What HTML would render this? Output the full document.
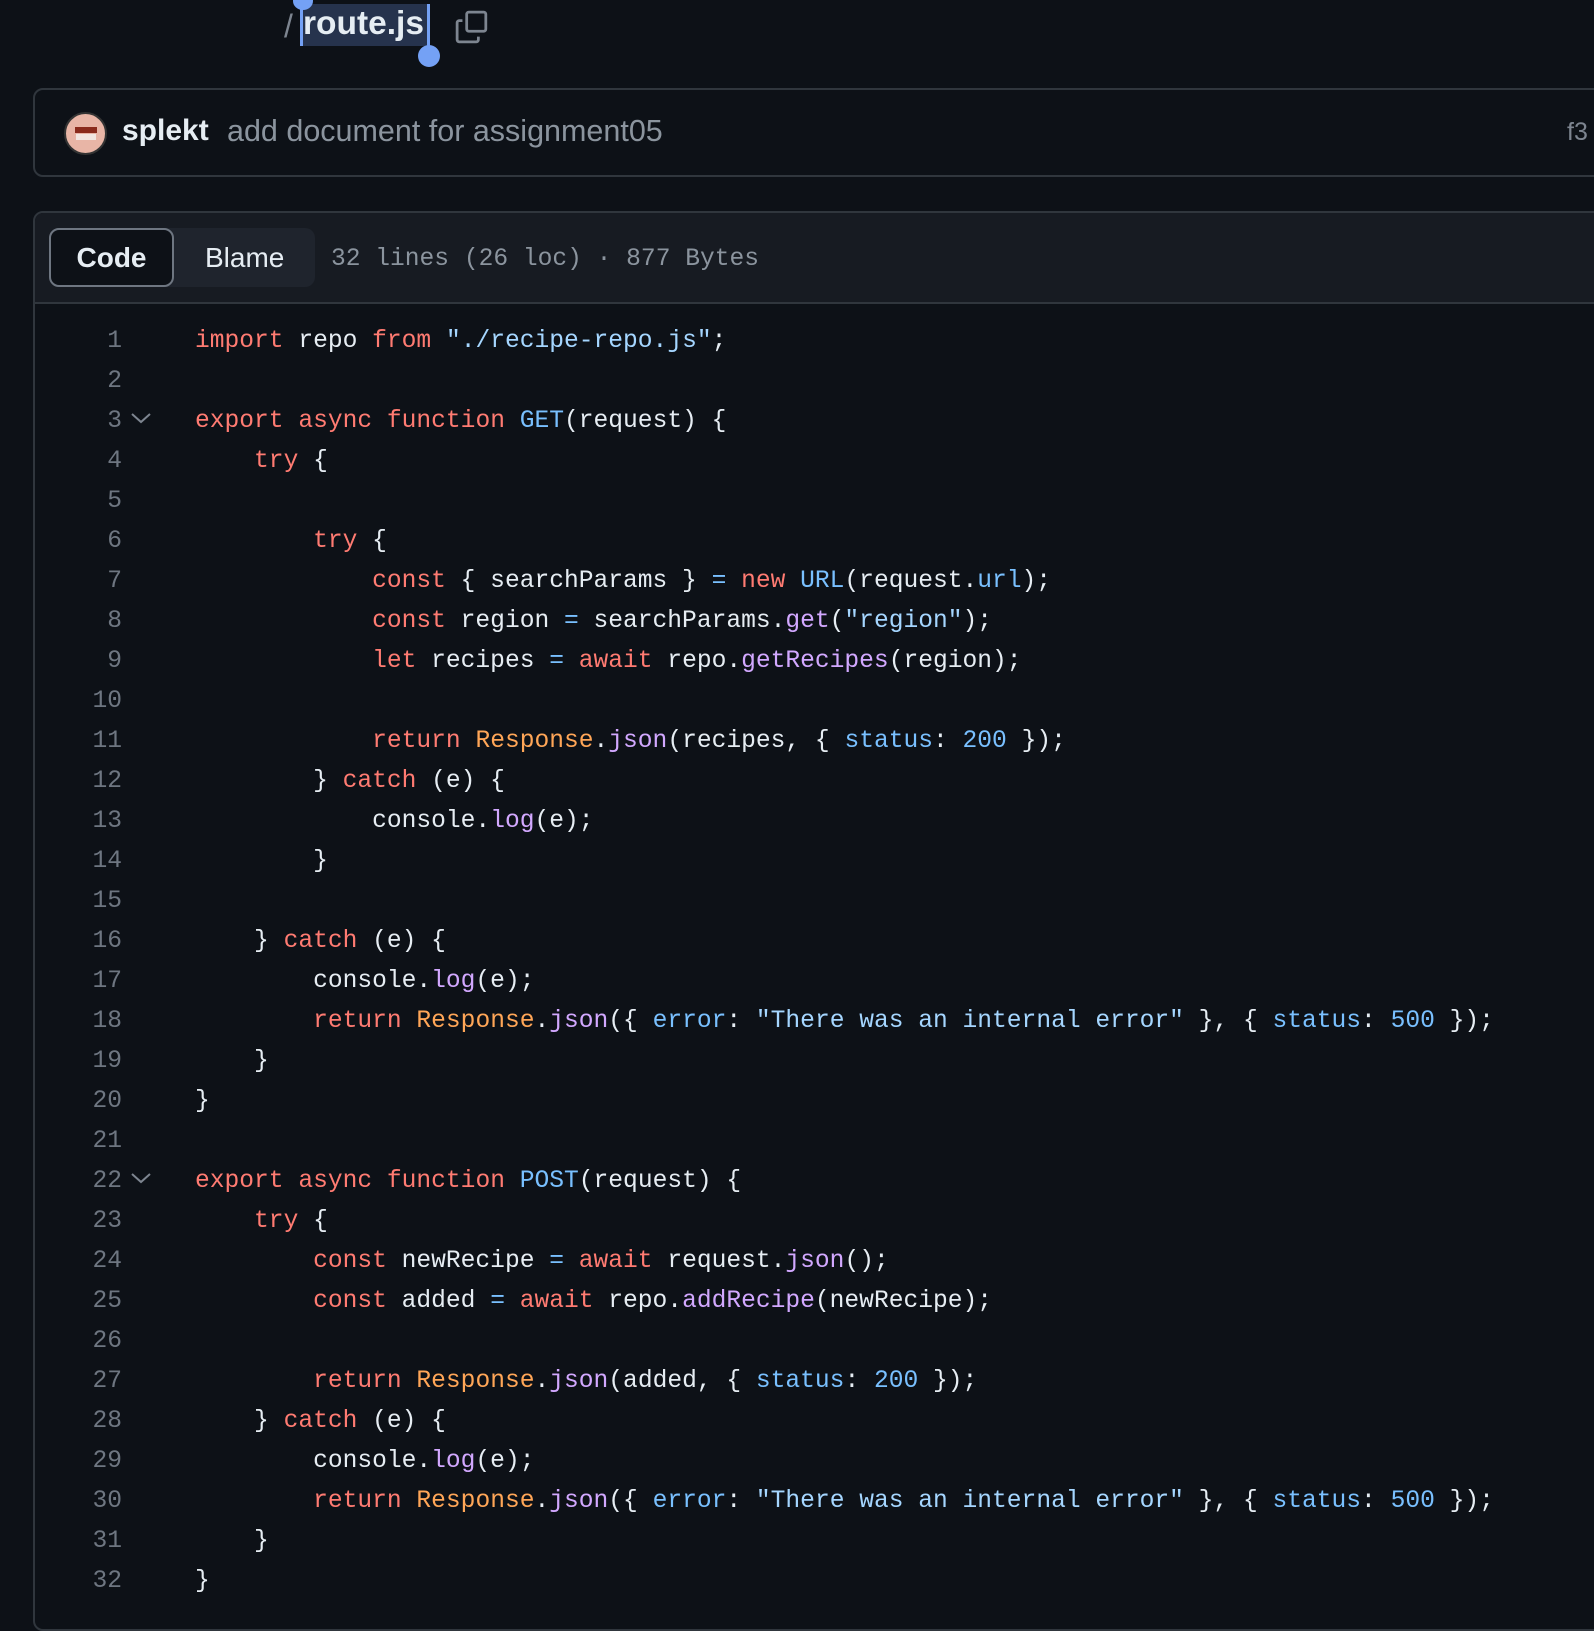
<!DOCTYPE html>
<html><head><meta charset="utf-8"><style>
html,body{margin:0;padding:0;background:#0d1117;width:1594px;height:1617px;overflow:hidden;font-family:"Liberation Sans",sans-serif;}
.abs{position:absolute}
.k{color:#ff7b72}.s{color:#a5d6ff}.f{color:#d2a8ff}.c{color:#79c0ff}.o{color:#ffa657}
pre{margin:0;font-family:"Liberation Mono",monospace;font-size:24.6px;line-height:40px;color:#e6edf3}
</style></head><body>
<div class="abs" style="left:284px;top:8px;font-size:32px;color:#7d8590;">/</div>
<div class="abs" style="left:301px;top:4px;width:128px;height:42px;background:#26334d;"></div>
<div class="abs" style="left:300px;top:4px;width:3px;height:42px;background:#74a1f5;"></div>
<div class="abs" style="left:427px;top:4px;width:3px;height:50px;background:#74a1f5;"></div>
<div class="abs" style="left:293px;top:-8px;width:20px;height:18px;border-radius:50%;background:#74a1f5;"></div>
<div class="abs" style="left:418px;top:45px;width:22px;height:22px;border-radius:50%;background:#74a1f5;"></div>
<div class="abs" style="left:303px;top:5px;font-size:33.5px;font-weight:bold;color:#e6edf3;">route.js</div>
<svg class="abs" style="left:455px;top:10px" width="34" height="34" viewBox="0 0 16 16" fill="none" stroke="#7d8590" stroke-width="1.3"><rect x="5.5" y="1" width="9" height="9" rx="1"/><path d="M3.5 5H2a1 1 0 0 0-1 1v8a1 1 0 0 0 1 1h8a1 1 0 0 0 1-1v-1.5"/></svg>

<div class="abs" style="left:33px;top:88px;width:1600px;height:89px;border:2px solid #30363d;border-radius:10px;box-sizing:border-box;"></div>
<div class="abs" style="left:64px;top:112px;width:43px;height:43px;border-radius:50%;background:#e8b5a6;border:2px solid #333;box-sizing:border-box;overflow:hidden"><div style="margin:13px 0 0 9px;width:22px;height:6px;background:#8a2b1c;"></div><div style="margin:1px 0 0 10px;width:20px;height:6px;background:#f2e6e0;"></div></div>
<div class="abs" style="left:122px;top:114px;font-size:30px;font-weight:bold;color:#e6edf3;">splekt</div>
<div class="abs" style="left:227px;top:114px;font-size:30.5px;color:#8b949e;">add document for assignment05</div>
<div class="abs" style="left:1567px;top:118px;font-size:25px;color:#7d8590;">f3</div>

<div class="abs" style="left:33px;top:211px;width:1600px;height:1420px;border:2px solid #30363d;border-radius:10px;box-sizing:border-box;overflow:hidden">
 <div style="height:89px;background:#171b22;border-bottom:2px solid #30363d;position:relative">
  <div class="abs" style="left:14px;top:15px;width:266px;height:59px;background:#1f242d;border-radius:10px"></div>
  <div class="abs" style="left:14px;top:15px;width:125px;height:59px;background:#0d1117;border:2px solid #6e7681;border-radius:10px;box-sizing:border-box;color:#e6edf3;font-weight:bold;font-size:28px;text-align:center;line-height:55px">Code</div>
  <div class="abs" style="left:170px;top:15px;font-size:28px;line-height:59px;color:#e6edf3">Blame</div>
  <div class="abs" style="left:296px;top:17px;font-family:'Liberation Mono',monospace;font-size:24.6px;line-height:59px;color:#8b949e">32 lines (26 loc) · 877 Bytes</div>
 </div>
</div>

<pre class="abs" style="left:60px;top:322px;width:62px;text-align:right;color:#6e7681">1
2
3
4
5
6
7
8
9
10
11
12
13
14
15
16
17
18
19
20
21
22
23
24
25
26
27
28
29
30
31
32</pre>
<svg class="abs" style="left:129px;top:410px" width="24" height="16" viewBox="0 0 24 16"><path d="M3 4l9 8 9-8" fill="none" stroke="#7d8590" stroke-width="2"/></svg>
<svg class="abs" style="left:129px;top:1170px" width="24" height="16" viewBox="0 0 24 16"><path d="M3 4l9 8 9-8" fill="none" stroke="#7d8590" stroke-width="2"/></svg>

<pre class="abs" style="left:195px;top:322px"><span class="k">import</span> repo <span class="k">from</span> <span class="s">"./recipe-repo.js"</span>;

<span class="k">export</span> <span class="k">async</span> <span class="k">function</span> <span class="c">GET</span>(request) {
    <span class="k">try</span> {

        <span class="k">try</span> {
            <span class="k">const</span> { searchParams } <span class="c">=</span> <span class="k">new</span> <span class="c">URL</span>(request.<span class="c">url</span>);
            <span class="k">const</span> region <span class="c">=</span> searchParams.<span class="f">get</span>(<span class="s">"region"</span>);
            <span class="k">let</span> recipes <span class="c">=</span> <span class="k">await</span> repo.<span class="f">getRecipes</span>(region);

            <span class="k">return</span> <span class="o">Response</span>.<span class="f">json</span>(recipes, { <span class="c">status</span>: <span class="c">200</span> });
        } <span class="k">catch</span> (e) {
            console.<span class="f">log</span>(e);
        }

    } <span class="k">catch</span> (e) {
        console.<span class="f">log</span>(e);
        <span class="k">return</span> <span class="o">Response</span>.<span class="f">json</span>({ <span class="c">error</span>: <span class="s">"There was an internal error"</span> }, { <span class="c">status</span>: <span class="c">500</span> });
    }
}

<span class="k">export</span> <span class="k">async</span> <span class="k">function</span> <span class="c">POST</span>(request) {
    <span class="k">try</span> {
        <span class="k">const</span> newRecipe <span class="c">=</span> <span class="k">await</span> request.<span class="f">json</span>();
        <span class="k">const</span> added <span class="c">=</span> <span class="k">await</span> repo.<span class="f">addRecipe</span>(newRecipe);

        <span class="k">return</span> <span class="o">Response</span>.<span class="f">json</span>(added, { <span class="c">status</span>: <span class="c">200</span> });
    } <span class="k">catch</span> (e) {
        console.<span class="f">log</span>(e);
        <span class="k">return</span> <span class="o">Response</span>.<span class="f">json</span>({ <span class="c">error</span>: <span class="s">"There was an internal error"</span> }, { <span class="c">status</span>: <span class="c">500</span> });
    }
}</pre>
</body></html>
